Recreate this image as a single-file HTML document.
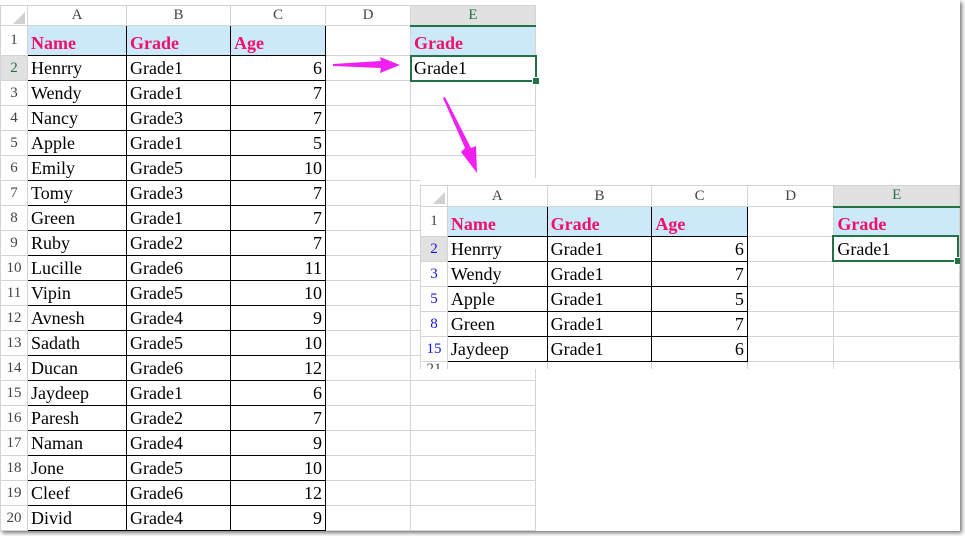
<!DOCTYPE html>
<html><head><meta charset="utf-8"><style>
body{margin:0;width:965px;height:536px;background:#fff;position:relative;overflow:hidden;font-family:"Liberation Serif",serif}
.frame{position:absolute;left:0;top:0;width:960px;height:531px;box-shadow:2px 2px 4px #777;background:#fff}
table{border-collapse:collapse;table-layout:fixed;position:absolute}
td{border:1px solid #d4d4d4;padding:0 3px;font-size:18px;white-space:nowrap;overflow:hidden;color:#000;line-height:1}
tr.h td{font-size:15px;color:#444;text-align:center;background:#fff}
td.rh{text-align:center;font-size:15px;color:#444;padding:0;border-color:#d4d4d4}
td.b{border:1px solid #000}
td.n{text-align:right}
td.hd{background:#cce9fa;color:#f0106a;font-weight:bold;vertical-align:bottom;padding-bottom:3px;border-color:#000}
td.he{background:#cce9fa;color:#f0106a;font-weight:bold;vertical-align:bottom;padding-bottom:3px}
td.sel{background:#e1e1e1!important;color:#217346!important}
td.blue{color:#1515e0}
.corner{width:0;height:0;border-left:12px solid transparent;border-bottom:12px solid #d0d0d0;margin:4px 2px 0 auto}
.selbox{position:absolute;border:2px solid #217346;box-sizing:border-box}
.selbox:after{content:"";position:absolute;right:-5px;bottom:-5px;width:6px;height:6px;background:#217346;border:1px solid #fff}
.sheet2{position:absolute;left:420px;top:178px;width:540px;height:191px;overflow:hidden;background:#fff}
</style></head><body>
<div class="frame"></div>
<table style="left:0;top:5px">
<colgroup><col style="width:27px"><col style="width:99px"><col style="width:104px"><col style="width:95px"><col style="width:85px"><col style="width:125px"></colgroup>
<tr class="h" style="height:20px"><td style="padding:0"><div class="corner"></div></td><td>A</td><td>B</td><td>C</td><td>D</td><td class="sel" style="border-bottom:2px solid #217346">E</td></tr>
<tr style="height:30px"><td class="rh">1</td><td class="hd">Name</td><td class="hd">Grade</td><td class="hd">Age</td><td></td><td class="he">Grade</td></tr>
<tr style="height:25px"><td class="rh sel">2</td><td class="b">Henrry</td><td class="b">Grade1</td><td class="b n">6</td><td></td><td>Grade1</td></tr>
<tr style="height:25px"><td class="rh">3</td><td class="b">Wendy</td><td class="b">Grade1</td><td class="b n">7</td><td></td><td></td></tr>
<tr style="height:25px"><td class="rh">4</td><td class="b">Nancy</td><td class="b">Grade3</td><td class="b n">7</td><td></td><td></td></tr>
<tr style="height:25px"><td class="rh">5</td><td class="b">Apple</td><td class="b">Grade1</td><td class="b n">5</td><td></td><td></td></tr>
<tr style="height:25px"><td class="rh">6</td><td class="b">Emily</td><td class="b">Grade5</td><td class="b n">10</td><td></td><td></td></tr>
<tr style="height:25px"><td class="rh">7</td><td class="b">Tomy</td><td class="b">Grade3</td><td class="b n">7</td><td></td><td></td></tr>
<tr style="height:25px"><td class="rh">8</td><td class="b">Green</td><td class="b">Grade1</td><td class="b n">7</td><td></td><td></td></tr>
<tr style="height:25px"><td class="rh">9</td><td class="b">Ruby</td><td class="b">Grade2</td><td class="b n">7</td><td></td><td></td></tr>
<tr style="height:25px"><td class="rh">10</td><td class="b">Lucille</td><td class="b">Grade6</td><td class="b n">11</td><td></td><td></td></tr>
<tr style="height:25px"><td class="rh">11</td><td class="b">Vipin</td><td class="b">Grade5</td><td class="b n">10</td><td></td><td></td></tr>
<tr style="height:25px"><td class="rh">12</td><td class="b">Avnesh</td><td class="b">Grade4</td><td class="b n">9</td><td></td><td></td></tr>
<tr style="height:25px"><td class="rh">13</td><td class="b">Sadath</td><td class="b">Grade5</td><td class="b n">10</td><td></td><td></td></tr>
<tr style="height:25px"><td class="rh">14</td><td class="b">Ducan</td><td class="b">Grade6</td><td class="b n">12</td><td></td><td></td></tr>
<tr style="height:25px"><td class="rh">15</td><td class="b">Jaydeep</td><td class="b">Grade1</td><td class="b n">6</td><td></td><td></td></tr>
<tr style="height:25px"><td class="rh">16</td><td class="b">Paresh</td><td class="b">Grade2</td><td class="b n">7</td><td></td><td></td></tr>
<tr style="height:25px"><td class="rh">17</td><td class="b">Naman</td><td class="b">Grade4</td><td class="b n">9</td><td></td><td></td></tr>
<tr style="height:25px"><td class="rh">18</td><td class="b">Jone</td><td class="b">Grade5</td><td class="b n">10</td><td></td><td></td></tr>
<tr style="height:25px"><td class="rh">19</td><td class="b">Cleef</td><td class="b">Grade6</td><td class="b n">12</td><td></td><td></td></tr>
<tr style="height:25px"><td class="rh">20</td><td class="b">Divid</td><td class="b">Grade4</td><td class="b n">9</td><td></td><td></td></tr>
</table>
<div class="selbox" style="left:410px;top:55px;width:127px;height:27px"></div>

<div class="sheet2">
<table style="left:0;top:7px">
<colgroup><col style="width:27px"><col style="width:100px"><col style="width:105px"><col style="width:96px"><col style="width:87px"><col style="width:126px"></colgroup>
<tr class="h" style="height:21px"><td style="padding:0"><div class="corner"></div></td><td>A</td><td>B</td><td>C</td><td>D</td><td class="sel" style="border-bottom:2px solid #217346">E</td></tr>
<tr style="height:30px"><td class="rh">1</td><td class="hd">Name</td><td class="hd">Grade</td><td class="hd">Age</td><td></td><td class="he">Grade</td></tr>
<tr style="height:25px"><td class="rh sel" style="color:#1515e0!important">2</td><td class="b">Henrry</td><td class="b">Grade1</td><td class="b n">6</td><td></td><td>Grade1</td></tr>
<tr style="height:25px"><td class="rh blue">3</td><td class="b">Wendy</td><td class="b">Grade1</td><td class="b n">7</td><td></td><td></td></tr>
<tr style="height:25px"><td class="rh blue">5</td><td class="b">Apple</td><td class="b">Grade1</td><td class="b n">5</td><td></td><td></td></tr>
<tr style="height:25px"><td class="rh blue">8</td><td class="b">Green</td><td class="b">Grade1</td><td class="b n">7</td><td></td><td></td></tr>
<tr style="height:25px"><td class="rh blue">15</td><td class="b">Jaydeep</td><td class="b">Grade1</td><td class="b n">6</td><td></td><td></td></tr>
<tr style="height:25px"><td class="rh" style="vertical-align:top">21</td><td></td><td></td><td></td><td></td><td></td></tr>
</table>
<div class="selbox" style="left:412px;top:57px;width:127px;height:27px"></div>
</div>

<svg style="position:absolute;left:0;top:0" width="965" height="536">
<polygon points="333,64 381,61 380,57 400,65 380,73 381,68 333,66" fill="#f020f0"/>
<polygon points="443,98 465,148 461,152 477,173 476,146 471,148 445,97" fill="#f020f0"/>
</svg>
</body></html>
